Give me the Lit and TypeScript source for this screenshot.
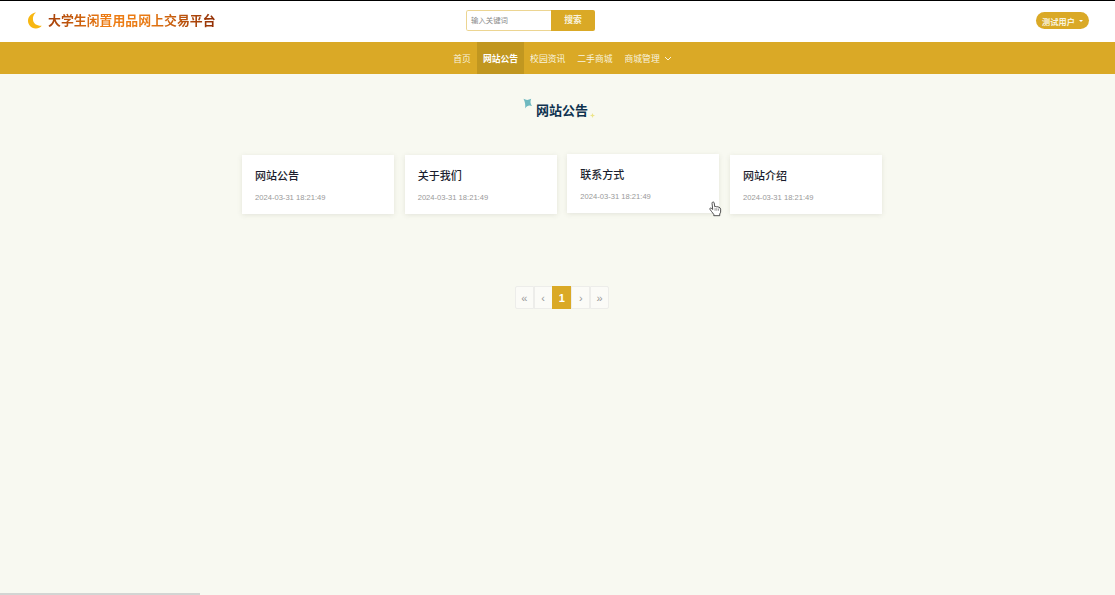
import { LitElement, html, css, svg } from "lit";
import { customElement } from "lit/decorators.js";

const CARDS = ["网站公告", "关于我们", "联系方式", "网站介绍"];
const NAV = ["首页", "网站公告", "校园资讯", "二手商城", "商城管理"];

@customElement("app-root")
export class AppRoot extends LitElement {
  static styles = css`
    :host {
      display: block;
      position: relative;
      height: 595px;
      overflow: hidden;
      background: #f8f9f1;
      font-family: "Liberation Sans", "Noto Sans CJK SC", sans-serif;
    }
    .top {
      height: 41px;
      border-top: 1px solid #000;
      background: #fff;
      display: grid;
      grid-template-columns: 466px 129px 1fr;
      align-items: center;
      box-sizing: content-box;
    }
    .brand {
      display: flex;
      align-items: center;
      padding-left: 27px;
      gap: 5px;
      margin-top: -2px;
    }
    .brand-title {
      font-size: 12.9px;
      font-weight: 700;
      line-height: 20px;
      background: linear-gradient(90deg, #a5400a 0%, #ee7c12 35%, #e87a14 60%, #8f2c04 100%);
      -webkit-background-clip: text;
      background-clip: text;
      color: transparent;
    }
    .search {
      display: flex;
      height: 21px;
      margin-top: -2px;
      border-radius: 2px;
      overflow: hidden;
    }
    .search-input {
      box-sizing: border-box;
      width: 85px;
      border: 1px solid #ecd592;
      border-right: 0;
      border-radius: 2px 0 0 2px;
      font-size: 7.4px;
      line-height: 19px;
      color: #8a8a8a;
      padding-left: 4px;
      background: #fff;
    }
    .search-btn {
      width: 44px;
      background: #daa926;
      color: #f8f3df;
      font-size: 8.8px;
      font-weight: 700;
      line-height: 21px;
      text-align: center;
    }
    .user-wrap {
      display: flex;
      justify-content: flex-end;
      padding-right: 26px;
    }
    .user {
      width: 53px;
      height: 17px;
      margin-top: -2px;
      border-radius: 9px;
      background: #daa926;
      color: #f8f3df;
      font-size: 8.2px;
      font-weight: 700;
      display: flex;
      align-items: center;
      justify-content: center;
      gap: 4px;
    }
    .caret {
      width: 0;
      height: 0;
      border-left: 2px solid transparent;
      border-right: 2px solid transparent;
      border-top: 2px solid #fff;
    }
    nav {
      height: 32px;
      background: #daa926;
      display: flex;
      justify-content: center;
      padding-left: 10px;
    }
    .nav-item {
      display: flex;
      align-items: center;
      gap: 4px;
      padding: 0 6px;
      color: #f8f3df;
      font-size: 8.8px;
    }
    .nav-item.active {
      background: #c19720;
      font-weight: 700;
      color: #fff;
    }
    main {
      padding-left: 9px;
    }
    .heading {
      display: flex;
      justify-content: center;
      padding-top: 24px;
      height: 57px;
      box-sizing: content-box;
    }
    .heading-inner {
      position: relative;
      font-size: 13px;
      font-weight: 700;
      line-height: 26px;
      height: 26px;
      color: #0f3350;
    }
    .star-a {
      position: absolute;
      left: -14px;
      top: 0;
    }
    .star-b {
      position: absolute;
      right: -7px;
      top: 15px;
    }
    .cards {
      display: grid;
      grid-template-columns: repeat(4, 152px);
      column-gap: 10.67px;
      width: 640px;
      margin: 0 auto;
    }
    .card {
      height: 59px;
      background: #fff;
      box-shadow: 0 1px 5px rgba(90, 90, 70, 0.13);
      padding: 13px 13px 0;
      box-sizing: border-box;
    }
    .card.hover {
      transform: translateY(-1px);
    }
    .card-title {
      font-size: 11px;
      font-weight: 500;
      line-height: 16px;
      color: #1b1e2e;
    }
    .card-date {
      margin-top: 9px;
      font-size: 7.6px;
      line-height: 10px;
      color: #999;
    }
    .pager {
      display: flex;
      justify-content: center;
      margin-top: 72px;
    }
    .page {
      box-sizing: border-box;
      width: 19px;
      height: 23px;
      margin-left: -0.2px;
      background: #fbfbf7;
      border: 1px solid #ededea;
      color: #999;
      font-size: 11px;
      display: flex;
      align-items: center;
      justify-content: center;
    }
    .page.first {
      border-radius: 2px 0 0 2px;
    }
    .page.last {
      border-radius: 0 2px 2px 0;
    }
    .page.current {
      background: #daa926;
      border-color: #daa926;
      color: #fff;
      font-weight: 700;
    }
    .cursor {
      position: absolute;
      left: 709px;
      top: 201px;
    }
    .scroll {
      position: absolute;
      left: 0;
      bottom: 0;
      width: 200px;
      height: 2px;
      background: #d3d5d3;
    }
  `;

  render() {
    return html`
      <div class="top">
        <div class="brand">
          <svg width="16" height="17" viewBox="0 0 16 17">
            <path d="M9 .5C6.500 2.500 5.600 5 6 8c.5 3.500 3.500 6 8.800 5.800C13 15.700 10.800 16.700 8.500 16.500 4 16.200 1 12.800 1 8.800 1 4.500 4.500 1 9 .5z" fill="#f8b711"/>
          </svg>
          <span class="brand-title">大学生闲置用品网上交易平台</span>
        </div>
        <div class="search">
          <div class="search-input">输入关键词</div>
          <div class="search-btn">搜索</div>
        </div>
        <div class="user-wrap">
          <div class="user">测试用户<span class="caret"></span></div>
        </div>
      </div>
      <nav>
        ${NAV.map(
          (n, i) => html`<div class="nav-item ${i === 1 ? "active" : ""}">
            ${n}
            ${i === 4
              ? html`<svg width="8" height="5" viewBox="0 0 8 5"><path d="M1 1l3 3 3-3" fill="none" stroke="#f8f3df" stroke-width="1"/></svg>`
              : ""}
          </div>`
        )}
      </nav>
      <main>
        <div class="heading">
          <div class="heading-inner">
            <svg class="star-a" width="11" height="11" viewBox="0 0 11 11">
              <path d="M1.500 .8C4 2.200 6 2.300 9.200 0.800 8 3.500 8.300 5.500 10 8 7.500 7 5 7.200 3.200 10.500 3.500 7 3.200 4 1.500.8z" fill="#6fb9c0"/>
            </svg>
            网站公告
            <svg class="star-b" width="5" height="5" viewBox="0 0 5 5">
              <path d="M2.500 0L3.200 1.800 5 2.500 3.200 3.200 2.500 5 1.800 3.200 0 2.500 1.800 1.800z" fill="#ece58c"/>
            </svg>
          </div>
        </div>
        <div class="cards">
          ${CARDS.map(
            (c, i) => html`<div class="card ${i === 2 ? "hover" : ""}">
              <div class="card-title">${c}</div>
              <div class="card-date">2024-03-31 18:21:49</div>
            </div>`
          )}
        </div>
        <div class="pager">
          <div class="page first">«</div>
          <div class="page">‹</div>
          <div class="page current">1</div>
          <div class="page">›</div>
          <div class="page last">»</div>
        </div>
      </main>
      <svg class="cursor" width="13" height="16" viewBox="0 0 15 18">
        ${svg`<path d="M4 1.200c.8-.6 1.800-.2 2 .8l.6 4.400 1.200-.3 1.200.4 1.300-.1 1.300.7 1.100.5.700 1.600v3.500l-1 2v2H5.500v-1.500L3 12 1 9.200c-.3-1 .7-1.700 1.500-1.200L4.300 9.500 3.500 2.500c0-.5.100-1 .5-1.300z" fill="#fff" stroke="#222" stroke-width="0.9" stroke-linejoin="round"/>
        <path d="M7 8v3M9 8v3M11 8.500V11" stroke="#555" stroke-width="0.7" fill="none"/>`}
      </svg>
      <div class="scroll"></div>
    `;
  }
}
